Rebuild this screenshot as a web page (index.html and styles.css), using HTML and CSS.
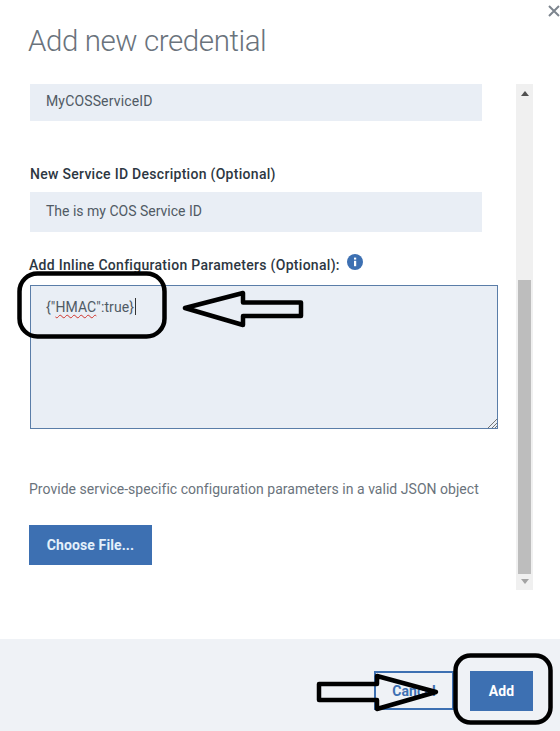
FILE: index.html
```html
<!DOCTYPE html>
<html lang="en">
<head>
<meta charset="utf-8">
<title>Add new credential</title>
<link rel="stylesheet" href="styles.css">
</head>
<body>
<div class="modal">
  <button class="close" aria-label="Close">
    <svg viewBox="0 0 12 12" width="12" height="12"><path d="M1 1l10 10M11 1L1 11" class="close-x"/></svg>
  </button>
  <h1 class="title">Add new credential</h1>
  <div class="content">
    <div class="form">
      <div class="input input-first">MyCOSServiceID</div>
      <label class="label label-desc">New Service ID Description (Optional)</label>
      <div class="input input-second">The is my COS Service ID</div>
      <div class="label label-inline">
        <span>Add Inline Configuration Parameters (Optional):</span>
        <svg class="info" viewBox="0 0 16 16" width="16" height="16"><circle cx="8" cy="8" r="8" class="info-bg"/><rect x="7" y="6.8" width="2.2" height="5.4" class="info-fg"/><rect x="7" y="3.6" width="2.2" height="2" class="info-fg"/></svg>
      </div>
      <div class="textarea">
        <span>{"<span class="misspelt">HMAC</span>":true}</span><span class="caret"></span>
        <svg class="grip" viewBox="0 0 9 9" width="9" height="9"><path d="M9 0L0 9M9 4L4 9M9 7L7 9" class="grip-line"/></svg>
      </div>
      <p class="help">Provide service-specific configuration parameters in a valid JSON object</p>
      <button class="btn btn-primary btn-file">Choose File...</button>
    </div>
    <div class="scrollbar">
      <svg class="sb-arrow" viewBox="0 0 8 5" width="8" height="5"><path d="M4 0l4 5H0z" class="sb-up"/></svg>
      <div class="sb-track"><div class="sb-thumb"></div></div>
      <svg class="sb-arrow" viewBox="0 0 8 5" width="8" height="5"><path d="M0 0h8L4 5z" class="sb-down"/></svg>
    </div>
  </div>
  <footer class="footer">
    <button class="btn btn-secondary">Cancel</button>
    <button class="btn btn-primary btn-add">Add</button>
  </footer>
  <svg class="annotations" viewBox="0 0 560 731" width="560" height="731">
    <rect x="19.500" y="273.500" width="145" height="63" rx="18" class="mark"/>
    <path d="M185 308L243 293V302.500H301V316H243V325Z" class="mark"/>
    <path d="M319 684H377V676L436 692L377 709V700H319Z" class="mark"/>
    <rect x="455.500" y="655.500" width="95" height="67" rx="15" class="mark"/>
  </svg>
</div>
</body>
</html>
```
FILE: styles.css
```css
* { box-sizing: border-box; }
html, body { margin: 0; padding: 0; background: #fff; }
body { font-family: "Roboto", "Liberation Sans", sans-serif; color: #3d4651; }
.modal { position: relative; width: 560px; height: 731px; overflow: hidden; display: flex; flex-direction: column; background: #fff; }
.close { position: absolute; top: 5px; right: 0; width: 12px; height: 12px; padding: 0; border: 0; background: none; display: block; }
.close-x { stroke: #7d858e; stroke-width: 2; fill: none; }
.title { margin: 0; padding: 22px 0 0 28px; height: 84px; font-family: "Roboto", sans-serif; font-weight: 300; font-size: 29.5px; line-height: 38px; letter-spacing: -0.42px; color: #6a737c; }
.content { display: flex; height: 506px; }
.form { width: 516px; padding-left: 30px; display: flex; flex-direction: column; align-items: flex-start; }
.input { width: 452px; background: #e9eef5; padding-left: 16px; font-size: 14px; color: #505a64; display: flex; align-items: center; }
.input-first { height: 37px; padding-bottom: 3px; letter-spacing: 0.15px; }
.input-second { height: 40px; padding-bottom: 2px; letter-spacing: 0; }
.label { font-size: 14px; font-weight: 500; line-height: 18px; color: #2d3742; letter-spacing: 0.29px; }
.label-desc { margin-top: 44px; margin-bottom: 9px; }
.label-inline { margin: 24px 0 11px -1px; display: flex; align-items: flex-start; gap: 7px; height: 18px; }
.info { margin-top: -2px; }
.info-bg { fill: #3d70b2; }
.info-fg { fill: #fff; }
.textarea { position: relative; width: 468px; height: 144px; background: #e9eef5; border: 1px solid #5a7da8; padding: 12px 15px; font-size: 14px; line-height: 18px; color: #505a64; letter-spacing: 0.1px; }
.misspelt { text-decoration: underline wavy #d0342c 1px; text-underline-offset: 2px; }
.caret { display: inline-block; width: 1px; height: 17px; background: #333; vertical-align: -3px; margin-left: 1px; }
.grip { position: absolute; right: 0; bottom: 0; }
.grip-line { stroke: #555; stroke-width: 0.8; fill: none; }
.help { margin: 51px 0 0 -1px; font-size: 14px; line-height: 18px; letter-spacing: 0.03px; color: #6a737c; }
.btn { font-family: "Roboto", sans-serif; font-size: 14px; font-weight: 700; letter-spacing: 0.1px; display: flex; align-items: center; justify-content: center; padding: 0; border-radius: 0; }
.btn-primary { background: #3d70b2; color: #fff; border: 0; }
.btn-file { margin: 27px 0 0 -1px; width: 123px; height: 40px; color: #e4f0fb; }
.btn-secondary { width: 80px; height: 39px; background: transparent; border: 2px solid #3d70b2; color: #3d70b2; }
.btn-add { width: 63px; height: 40px; margin-left: 16px; }
.scrollbar { width: 17px; height: 506px; background: #f0f0f0; display: flex; flex-direction: column; align-items: center; justify-content: space-between; padding: 7px 0 6px; }
.sb-arrow { flex: none; }
.sb-up { fill: #505050; }
.sb-down { fill: #a3a3a3; }
.sb-track { flex: 1; width: 13px; display: flex; flex-direction: column; justify-content: flex-end; padding-bottom: 5px; }
.sb-thumb { height: 294px; background: #bdbdbd; }
.footer { margin-top: 49px; height: 92px; background: #eff2f6; display: flex; justify-content: flex-end; align-items: flex-start; padding: 32px 27px 0 0; }
.annotations { position: absolute; left: 0; top: 0; pointer-events: none; }
.mark { fill: none; stroke: #000; stroke-width: 4.500; stroke-linejoin: round; }
```
